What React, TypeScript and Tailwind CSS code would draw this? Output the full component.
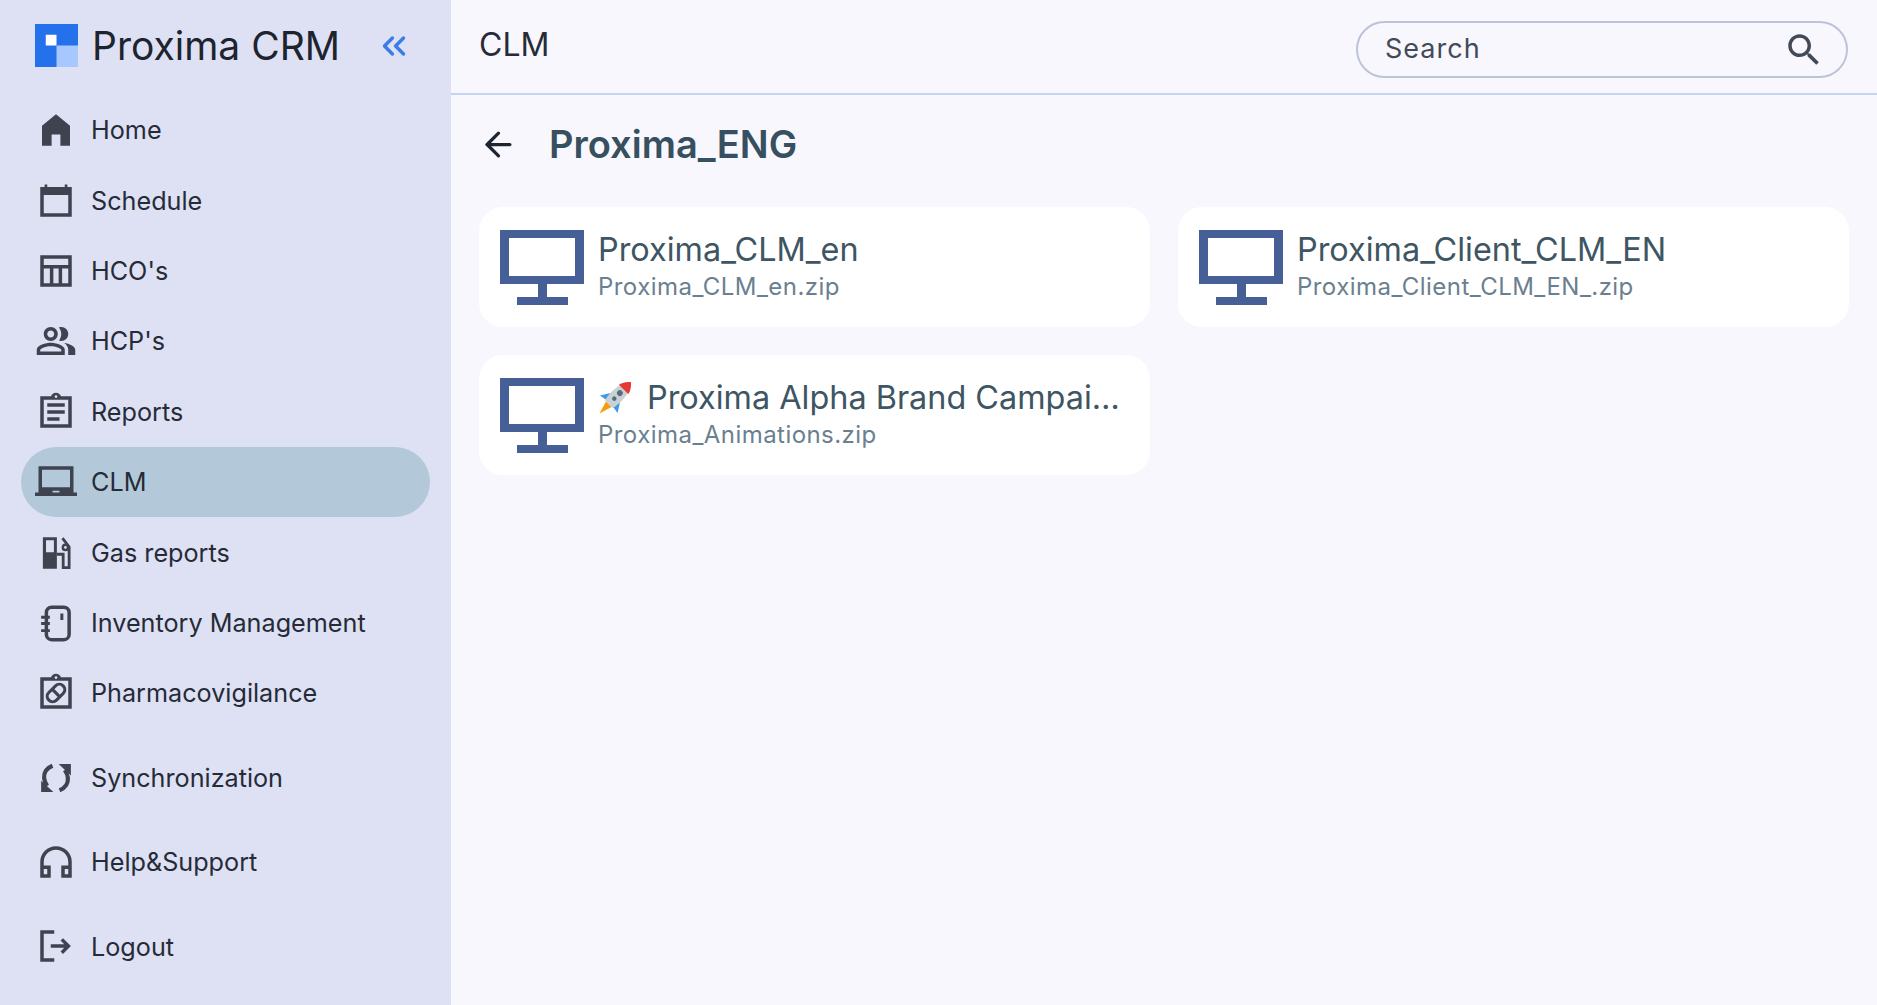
import React from 'react';
import { ChevronsLeft, ArrowLeft } from 'lucide-react';

const fill = { fill: 'currentColor', fillRule: 'evenodd' as const, clipRule: 'evenodd' as const };

const NavIcon: React.FC<{ children: React.ReactNode }> = ({ children }) => (
  <svg viewBox="0 0 24 24" className="w-[42px] h-[42px] shrink-0 text-[#3f4350]">
    {children}
  </svg>
);

const icons: Record<string, React.ReactNode> = {
  home: <path {...fill} d="M4 21V9.500L12 3l8 6.500V21h-5.500v-6.500h-5V21z" />,
  schedule: <path {...fill} d="M3 4h2.500V2.500h1.500V4h10V2.500h1.500V4H21v17H3zM5 8.500V19h14V8.500z" />,
  hco: <path {...fill} d="M3 3h18v18H3zM5 5v3.500h14V5zM5 10.500V19h3.500v-8.500zM10.500 10.500V19h3v-8.500zM15.500 10.500V19H19v-8.500z" />,
  hcp: (
    <g fill="currentColor">
      <path d="M16.670 13.130C18.040 14.060 19 15.320 19 17v3h4v-3c0-2.180-3.570-3.470-6.330-3.870z" />
      <path d="M15 12c2.210 0 4-1.790 4-4s-1.790-4-4-4c-.47 0-.91.1-1.330.24C14.500 5.270 15 6.580 15 8s-.5 2.730-1.330 3.760c.42.14.86.24 1.330.24z" />
      <path d="M9 12c2.210 0 4-1.790 4-4s-1.790-4-4-4-4 1.790-4 4 1.790 4 4 4zm0-6c1.100 0 2 .9 2 2s-.9 2-2 2-2-.9-2-2 .9-2 2-2z" />
      <path d="M9 13c-2.670 0-8 1.340-8 4v3h16v-3c0-2.660-5.330-4-8-4zm6 5H3v-.99C3.200 16.290 6.300 15 9 15s5.800 1.290 6 2v1z" />
    </g>
  ),
  reports: <path {...fill} d="M3 3h6.200C9.600 1.800 10.700 1 12 1s2.400.8 2.800 2H21v18H3zM5 5v14h14V5zM11.200 3.200a.8.8 0 1 0 1.600 0 .8.8 0 1 0-1.600 0zM7 7h10v2H7zM7 11h10v2H7zM7 15h7v2H7z" />,
  clm: <path {...fill} d="M22 18V3H2v15H0v2h24v-2h-2zm-8 0h-4v-1h4v1zm6-3H4V5h16v10z" />,
  gas: (
    <g>
      <path {...fill} d="M4.500 3h8v18h-8zM6.300 4.700v6.800h4.500V4.700z" />
      <path d="M12.500 12.700h3.600v7.600h3.400V8.500L15.700 3.500" fill="none" stroke="currentColor" strokeWidth="1.600" />
      <circle cx="17.400" cy="8.800" r="1.500" fill="none" stroke="currentColor" strokeWidth="1.400" />
    </g>
  ),
  inventory: (
    <g>
      <rect x="6.500" y="3" width="13" height="18.500" rx="3" fill="none" stroke="currentColor" strokeWidth="2" />
      <path fill="currentColor" d="M3.500 7.800h5v1.700h-5zM3.500 11.400h5v1.700h-5zM3.500 15.500h5v1.700h-5zM14.500 6.500h1.700v3.800h-1.700z" />
    </g>
  ),
  pharma: (
    <g>
      <path {...fill} d="M3 3h6.200C9.600 1.800 10.700 1 12 1s2.400.8 2.800 2H21v18H3zM5 5v14h14V5zM11.200 3.200a.8.8 0 1 0 1.600 0 .8.8 0 1 0-1.600 0z" />
      <g transform="rotate(-45 12 12)">
        <rect x="6.200" y="8.900" width="11.600" height="6.200" rx="3.100" fill="none" stroke="currentColor" strokeWidth="1.800" />
        <path d="M12 8.900v6.200" stroke="currentColor" strokeWidth="1.800" />
      </g>
    </g>
  ),
  sync: (
    <g>
      <path d="M10 5C6.700 6.300 5 8.800 5.200 12c.1 1.500.7 3 1.800 4.500" fill="none" stroke="currentColor" strokeWidth="2.400" />
      <path d="M14 19c3.300-1.300 5-3.800 4.800-7-.1-1.500-.7-3-1.800-4.500" fill="none" stroke="currentColor" strokeWidth="2.400" />
      <path fill="currentColor" d="M3.500 13.500V20H10.500zM20.500 10.500V4H13.500z" />
    </g>
  ),
  help: <path {...fill} d="M12 3a9 9 0 0 0-9 9v9h6v-7H5v-2a7 7 0 0 1 14 0v2h-4v7h6v-9a9 9 0 0 0-9-9zM5 16h2v3H5zM17 16h2v3h-2z" />,
  logout: <path {...fill} d="M11 3H3v18h8v-2H5V5h6zM16 7.500l-1.400 1.400 2.100 2.100H9v2h7.700l-2.100 2.100 1.400 1.400 4.500-4.500z" />,
};

const navItems = [
  { key: 'home', label: 'Home' },
  { key: 'schedule', label: 'Schedule' },
  { key: 'hco', label: "HCO's" },
  { key: 'hcp', label: "HCP's" },
  { key: 'reports', label: 'Reports' },
  { key: 'clm', label: 'CLM', active: true },
  { key: 'gas', label: 'Gas reports' },
  { key: 'inventory', label: 'Inventory Management' },
  { key: 'pharma', label: 'Pharmacovigilance' },
  { key: 'sync', label: 'Synchronization', gap: true },
  { key: 'help', label: 'Help&Support', gap: true },
  { key: 'logout', label: 'Logout', gap: true },
];

const Logo = () => (
  <svg viewBox="0 0 42 42" className="w-[43px] h-[43px] shrink-0">
    <rect width="42" height="42" fill="#2570eb" />
    <rect x="21" y="21" width="21" height="21" fill="#a6c8ff" />
    <rect x="10.500" y="10.500" width="10.500" height="10.500" fill="#ffffff" />
  </svg>
);

const Monitor = () => (
  <svg viewBox="0 0 84 75" className="w-[84px] h-[75px] shrink-0 text-[#466097]">
    <path {...fill} d="M0 0h84v54H47v13h21v8H17v-8h21V54H0zM9 8v38h66V8z" />
  </svg>
);

const Rocket = () => (
  <svg viewBox="3 3 26 26" className="w-[34px] h-[34px] shrink-0">
    <g transform="translate(19 13) rotate(45)">
      <path fill="#f59e0b" d="M-3 11h6L0 21z" />
      <path fill="#3b9ae1" d="M-4.500 3L-9.500 11L-3.500 10zM4.500 3L9.500 11L3.500 10z" />
      <path fill="#c9d1d6" d="M0-13C6-8 6 6 4 11H-4C-6 6-6-8 0-13z" />
      <path fill="#e53935" d="M0-13C3.500-10 4.800-7 5-5H-5C-4.800-7-3.500-10 0-13z" />
      <circle cx="0" cy="-1" r="2.200" fill="#546e7a" />
      <circle cx="0" cy="5" r="1.700" fill="#546e7a" />
    </g>
  </svg>
);

const CLMCard: React.FC<{ title: string; file: string; rocket?: boolean }> = ({ title, file, rocket }) => (
  <div className="bg-white rounded-[24px] h-[120px] pl-[21px] pr-[28px] flex items-center gap-[14px] min-w-0">
    <Monitor />
    <div className="min-w-0 flex-1 -mt-[4px]">
      <div className="flex items-center gap-[15px] text-[32.4px] leading-[44px] text-[#3e5563]">
        {rocket && <Rocket />}
        <span className="whitespace-nowrap">{title}</span>
      </div>
      <div className="text-[24px] leading-[30px] tracking-[0.45px] text-[#6a8090] whitespace-nowrap">{file}</div>
    </div>
  </div>
);

export default function App() {
  return (
    <div className="flex h-screen overflow-hidden bg-[#f9f7fe] font-['Inter',sans-serif]">
      <aside className="w-[451px] shrink-0 bg-[#dee1f3] px-[21px]">
        <div className="h-[95px] flex items-center pl-[14px] pr-[17px] pb-[4px]">
          <Logo />
          <span className="ml-[14px] mt-[2px] text-[39px] text-[#1d2430] flex-1 whitespace-nowrap">Proxima CRM</span>
          <ChevronsLeft size={38} strokeWidth={2.200} className="text-[#3b7de8]" />
        </div>
        <nav>
          {navItems.map((item) => (
            <div
              key={item.key}
              className={`h-[70.4px] flex items-center gap-[14px] pl-[14px] rounded-full text-[25.2px] text-[#262b38] ${item.active ? 'bg-[#b3c9da]' : ''} ${item.gap ? 'mt-[14px]' : ''}`}
            >
              <NavIcon>{icons[item.key]}</NavIcon>
              <span className="mt-[2px]">{item.label}</span>
            </div>
          ))}
        </nav>
      </aside>

      <main className="flex-1 min-w-0">
        <header className="h-[95px] border-b-2 border-[#c3d3f5] flex items-center justify-between pl-[28px] pr-[29px]">
          <span className="text-[32px] text-[#262b38] -mt-[4px]">CLM</span>
          <div className="w-[492px] h-[57px] mt-[6px] rounded-full border-2 border-[#bcc3d8] flex items-center justify-between pl-[27px] pr-[21px]">
            <span className="text-[27px] tracking-[1px] text-[#434a57]">Search</span>
            <svg viewBox="0 0 24 24" className="w-[42px] h-[42px] text-[#434a57]">
              <path
                fill="currentColor"
                d="M15.500 14h-.79l-.28-.27C15.410 12.590 16 11.110 16 9.500 16 5.910 13.090 3 9.500 3S3 5.910 3 9.500 5.910 16 9.500 16c1.610 0 3.090-.59 4.230-1.570l.27.28v.79l5 4.990L20.490 19l-4.990-5zm-6 0C7.010 14 5 11.990 5 9.500S7.010 5 9.500 5 14 7.010 14 9.500 11.990 14 9.500 14z"
              />
            </svg>
          </div>
        </header>

        <div className="pl-[28px] pr-[28px]">
          <div className="h-[112px] flex items-center gap-[31px] pb-[14px]">
            <ArrowLeft size={39} strokeWidth={2} className="text-[#1f2530]" />
            <h1 className="text-[38px] font-semibold text-[#37505f]">Proxima_ENG</h1>
          </div>
          <div className="grid grid-cols-2 gap-[28px]">
            <CLMCard title="Proxima_CLM_en" file="Proxima_CLM_en.zip" />
            <CLMCard title="Proxima_Client_CLM_EN" file="Proxima_Client_CLM_EN_.zip" />
            <CLMCard title="Proxima Alpha Brand Campai…" file="Proxima_Animations.zip" rocket />
          </div>
        </div>
      </main>
    </div>
  );
}
